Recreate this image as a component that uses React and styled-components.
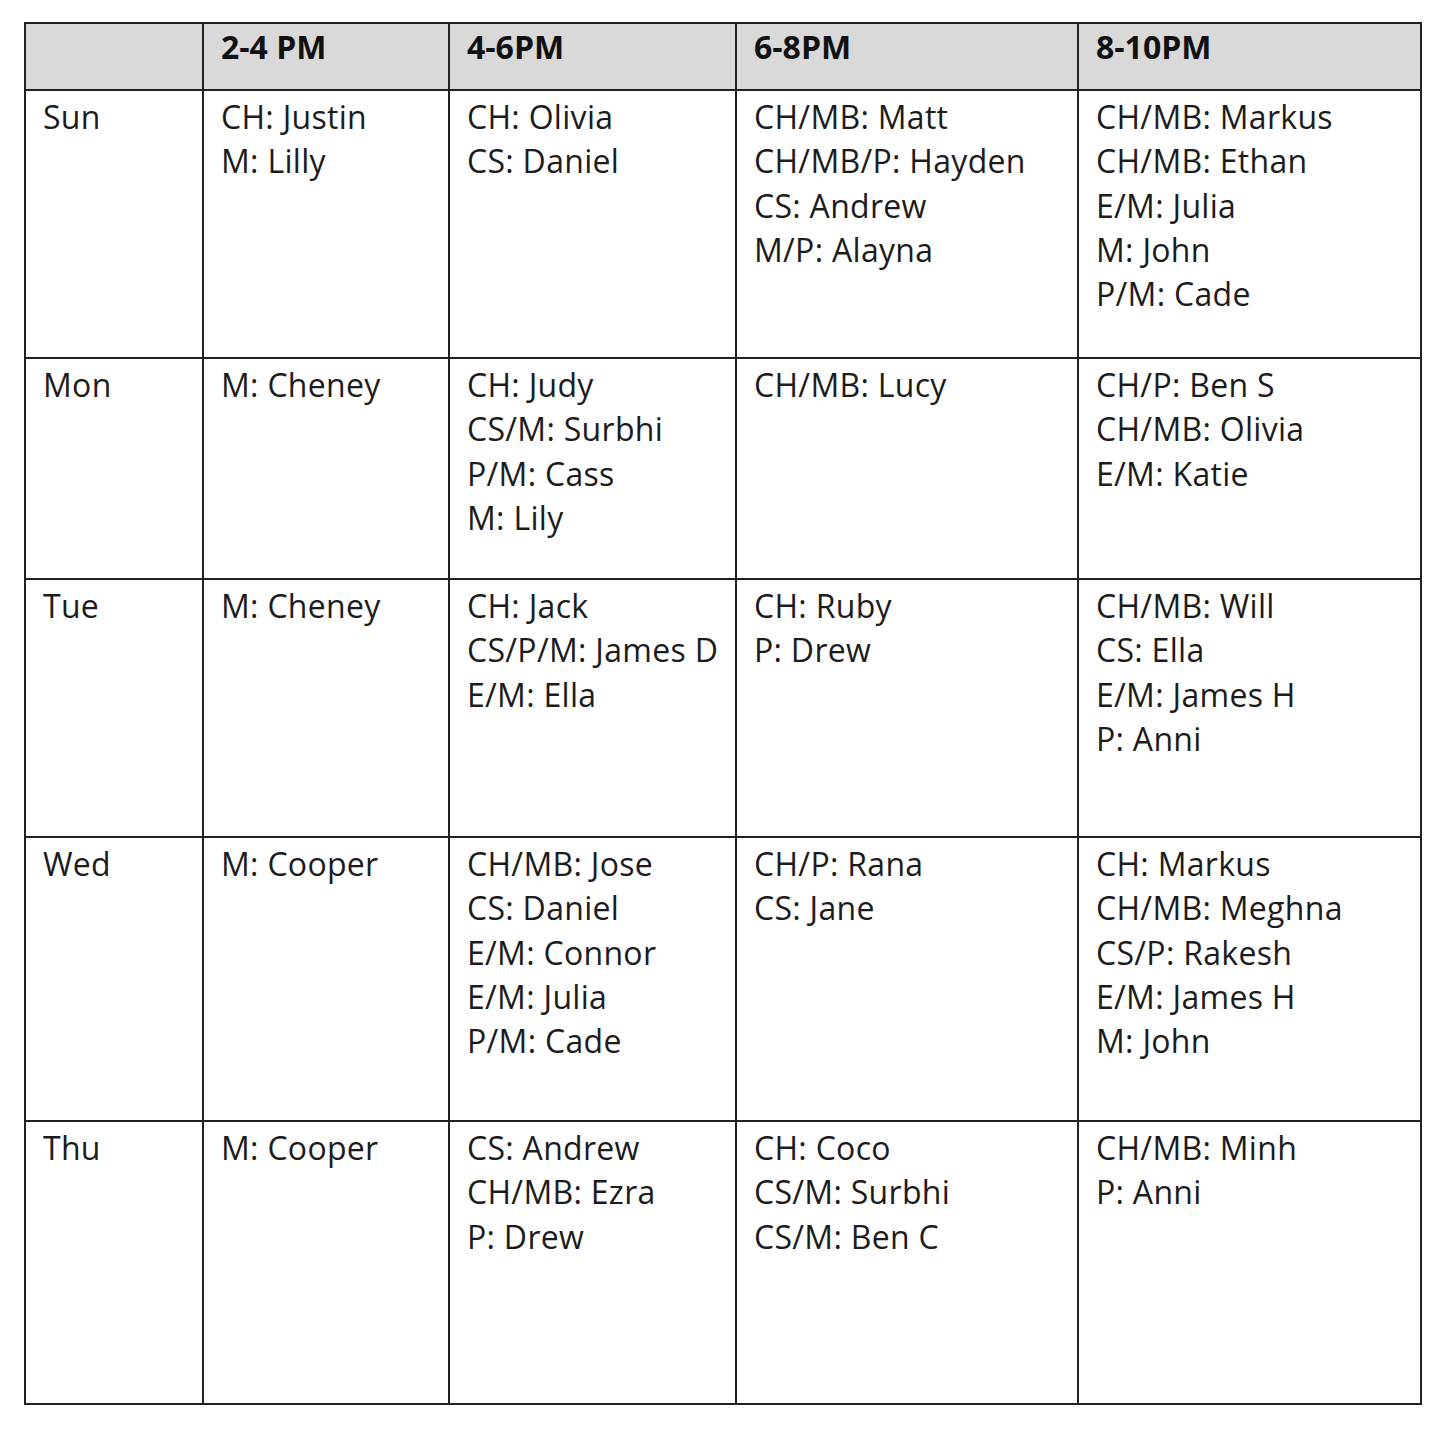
import React from 'react';
import styled, { createGlobalStyle } from 'styled-components';

const GlobalStyle = createGlobalStyle`
  body {
    margin: 0;
    background: #ffffff;
    font-family: 'Open Sans', 'Liberation Sans', sans-serif;
    color: #1a1a1a;
  }
`;

const columns = [
  { label: '', width: 178 },
  { label: '2-4 PM', width: 246 },
  { label: '4-6PM', width: 287 },
  { label: '6-8PM', width: 342 },
  { label: '8-10PM', width: 343 },
];

const rows = [
  {
    day: 'Sun',
    height: 268,
    slots: [
      ['CH: Justin', 'M: Lilly'],
      ['CH: Olivia', 'CS: Daniel'],
      ['CH/MB: Matt', 'CH/MB/P: Hayden', 'CS: Andrew', 'M/P: Alayna'],
      ['CH/MB: Markus', 'CH/MB: Ethan', 'E/M: Julia', 'M: John', 'P/M: Cade'],
    ],
  },
  {
    day: 'Mon',
    height: 221,
    slots: [
      ['M: Cheney'],
      ['CH: Judy', 'CS/M: Surbhi', 'P/M: Cass', 'M: Lily'],
      ['CH/MB: Lucy'],
      ['CH/P: Ben S', 'CH/MB: Olivia', 'E/M: Katie'],
    ],
  },
  {
    day: 'Tue',
    height: 258,
    slots: [
      ['M: Cheney'],
      ['CH: Jack', 'CS/P/M: James D', 'E/M: Ella'],
      ['CH: Ruby', 'P: Drew'],
      ['CH/MB: Will', 'CS: Ella', 'E/M: James H', 'P: Anni'],
    ],
  },
  {
    day: 'Wed',
    height: 284,
    slots: [
      ['M: Cooper'],
      ['CH/MB: Jose', 'CS: Daniel', 'E/M: Connor', 'E/M: Julia', 'P/M: Cade'],
      ['CH/P: Rana', 'CS: Jane'],
      ['CH: Markus', 'CH/MB: Meghna', 'CS/P: Rakesh', 'E/M: James H', 'M: John'],
    ],
  },
  {
    day: 'Thu',
    height: 283,
    slots: [
      ['M: Cooper'],
      ['CS: Andrew', 'CH/MB: Ezra', 'P: Drew'],
      ['CH: Coco', 'CS/M: Surbhi', 'CS/M: Ben C'],
      ['CH/MB: Minh', 'P: Anni'],
    ],
  },
];

const Page = styled.div`
  width: 1440px;
  height: 1440px;
  padding: 22px 0 0 24px;
  box-sizing: border-box;
`;

const Table = styled.table`
  border-collapse: collapse;
  table-layout: fixed;
  width: 1398px;
`;

const HeadCell = styled.th`
  background: #d9d9d9;
  border: 2px solid #222222;
  height: 64px;
  padding: 1px 17px 0;
  text-align: left;
  vertical-align: top;
  font-size: 32px;
  font-weight: 700;
  line-height: 44px;
  color: #111111;
`;

const Row = styled.tr`
  height: ${(p) => p.$height}px;
`;

const Cell = styled.td`
  border: 2px solid #222222;
  padding: 4px 17px 0;
  vertical-align: top;
  font-size: 32px;
  line-height: 44.3px;
  letter-spacing: 0.3px;
  white-space: nowrap;
  color: #1c1c1c;
`;

const Line = styled.div``;

export default function App() {
  return (
    <Page>
      <GlobalStyle />
      <Table>
        <colgroup>
          {columns.map((c, i) => (
            <col key={i} style={{ width: c.width }} />
          ))}
        </colgroup>
        <thead>
          <tr>
            {columns.map((c, i) => (
              <HeadCell key={i}>{c.label}</HeadCell>
            ))}
          </tr>
        </thead>
        <tbody>
          {rows.map((r) => (
            <Row key={r.day} $height={r.height}>
              <Cell>{r.day}</Cell>
              {r.slots.map((names, i) => (
                <Cell key={i}>
                  {names.map((n) => (
                    <Line key={n}>{n}</Line>
                  ))}
                </Cell>
              ))}
            </Row>
          ))}
        </tbody>
      </Table>
    </Page>
  );
}
